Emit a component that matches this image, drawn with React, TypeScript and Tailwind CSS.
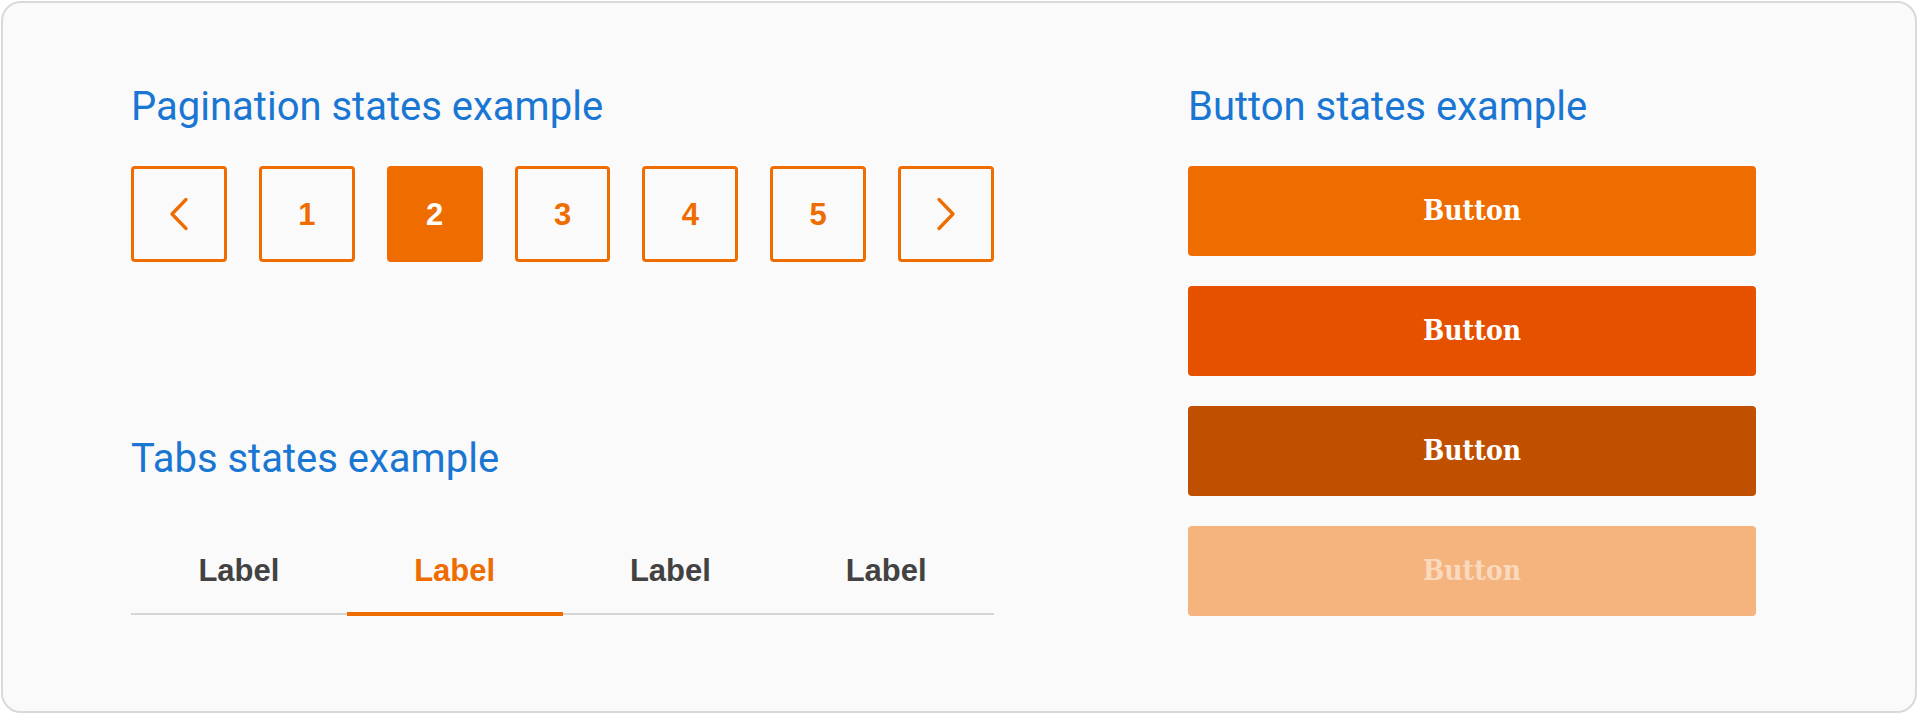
import { ReactNode } from "react";

const pages = ["1", "2", "3", "4", "5"];
const tabs = ["Label", "Label", "Label", "Label"];

function PageBox({ active, children }: { active?: boolean; children: ReactNode }) {
  return (
    <div
      className={
        "w-[96px] h-[96px] rounded-[4px] border-[3px] border-[#ef6c00] flex items-center justify-center text-[31px] font-bold leading-none " +
        (active ? "bg-[#ef6c00] text-white" : "text-[#ef6c00]")
      }
      style={{ fontFamily: '"Liberation Sans", Arial, sans-serif' }}
    >
      {children}
    </div>
  );
}

function Chevron({ dir }: { dir: "left" | "right" }) {
  return (
    <svg width="20" height="34" viewBox="0 0 20 34" fill="none">
      <polyline
        points={dir === "left" ? "17,2.5 3,17 17,31.5" : "3,2.5 17,17 3,31.5"}
        stroke="#ef6c00"
        strokeWidth="3.3"
        strokeLinecap="round"
        strokeLinejoin="round"
      />
    </svg>
  );
}

function Title({ children }: { children: ReactNode }) {
  return (
    <h2
      className="text-[40px] leading-none text-[#1976d2]"
      style={{ fontFamily: "Roboto, sans-serif" }}
    >
      {children}
    </h2>
  );
}

const buttonStyles = [
  "bg-[#ef6c00] text-white",
  "bg-[#e65100] text-white",
  "bg-[#c05000] text-white",
  "bg-[#ef6c00]/50 text-white/50",
];

export default function App() {
  return (
    <div className="w-[1918px] h-[714px] bg-white p-[1px]">
      <div className="h-[712px] rounded-[20px] border-2 border-[#d9d9d9] bg-[#fafafa] pl-[128px] pt-[84px] flex gap-[194px]">
        {/* LEFT */}
        <div className="w-[863px]">
          <Title>Pagination states example</Title>

          <div className="mt-[39px] flex gap-[32px]">
            <PageBox>
              <Chevron dir="left" />
            </PageBox>
            {pages.map((p) => (
              <PageBox key={p} active={p === "2"}>
                {p}
              </PageBox>
            ))}
            <PageBox>
              <Chevron dir="right" />
            </PageBox>
          </div>

          <div className="mt-[177px]">
            <Title>Tabs states example</Title>
          </div>

          <div
            className="mt-[76px] flex items-start border-b-2 border-[#d6d6d6]"
            style={{ fontFamily: '"Liberation Sans", Arial, sans-serif' }}
          >
            {tabs.map((t, i) => (
              <div
                key={i}
                className={
                  "w-1/4 text-center text-[31px] font-bold leading-none pb-[26px] " +
                  (i === 1
                    ? "text-[#ef6c00] border-b-4 border-[#ef6c00] mb-[-3px]"
                    : "text-[#424242]")
                }
              >
                {t}
              </div>
            ))}
          </div>
        </div>

        {/* RIGHT */}
        <div className="w-[568px]">
          <Title>Button states example</Title>
          <div className="mt-[39px] flex flex-col gap-[30px]">
            {buttonStyles.map((c, i) => (
              <button
                key={i}
                className={"h-[90px] w-full rounded-[4px] text-[28px] font-bold font-stretch-condensed " + c}
                style={{ fontFamily: '"DejaVu Serif Condensed", "DejaVu Serif", serif' }}
              >
                Button
              </button>
            ))}
          </div>
        </div>
      </div>
    </div>
  );
}
